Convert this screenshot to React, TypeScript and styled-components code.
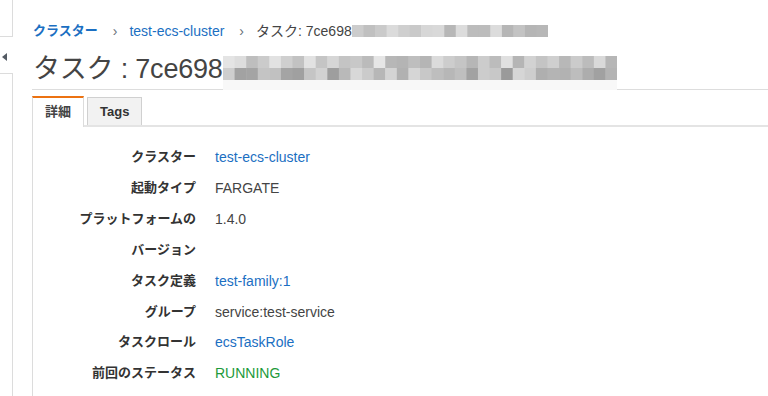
import React from "react";
import styled, { createGlobalStyle } from "styled-components";

const GlobalStyle = createGlobalStyle`
  html, body { margin: 0; padding: 0; background: #fff; }
  body {
    font-family: "Liberation Sans", Arial, "Noto Sans CJK JP", sans-serif;
    color: #444;
    -webkit-font-smoothing: antialiased;
  }
`;

const Page = styled.div`
  display: flex;
  min-height: 396px;
  height: 396px;
  overflow: hidden;
`;

const Sidebar = styled.aside`
  width: 13px;
  flex: 0 0 13px;
  display: flex;
  flex-direction: column;
`;

const SideTop = styled.div`
  height: 37px;
  border-right: 1px solid #dcdcdc;
  border-bottom: 1px solid #dcdcdc;
  box-sizing: border-box;
`;

const SideToggle = styled.div`
  height: 36px;
  display: flex;
  align-items: center;
  padding: 4px 0 0 2px;
  box-sizing: border-box;
`;

const Arrow = styled.span`
  width: 0;
  height: 0;
  border-top: 4px solid transparent;
  border-bottom: 4px solid transparent;
  border-right: 5px solid #545b64;
`;

const SideBottom = styled.div`
  flex: 1;
  border-right: 1px solid #dcdcdc;
  border-top: 1px solid #dcdcdc;
`;

const Main = styled.main`
  flex: 1;
  padding-left: 19px;
  display: flex;
  flex-direction: column;
`;

const Breadcrumb = styled.nav`
  display: flex;
  align-items: center;
  margin-top: 22px;
  padding-left: 1px;
  height: 18px;
  font-size: 14px;
  line-height: 18px;
  white-space: nowrap;
`;

const Crumb = styled.a<{ $bold?: boolean }>`
  color: #1b6fc2;
  text-decoration: none;
  font-weight: ${(p) => (p.$bold ? 700 : 400)};
  font-size: ${(p) => (p.$bold ? "13px" : "14px")};
`;

const Sep = styled.span`
  color: #687078;
  font-size: 14px;
  margin: 0 12px 0 15px;
`;

const CurrentCrumb = styled.span`
  color: #444;
  font-size: 14px;
`;

const Title = styled.h1`
  display: flex;
  align-items: flex-end;
  margin: 9px 0 0 0;
  height: 40px;
  border-bottom: 1px solid #dddddd;
  font-size: 27px;
  font-weight: 400;
  color: #444;
  white-space: nowrap;
`;

const TitleText = styled.span`
  line-height: 38px;
  padding-left: 1px;
  padding-bottom: 1px;
  letter-spacing: -0.2px;
`;

const MosaicSvg = styled.svg<{ $drop?: boolean }>`
  display: block;
  flex: 0 0 auto;
  margin-bottom: ${(p) => (p.$drop ? "-1px" : "0")};
`;

const TabBar = styled.div`
  display: flex;
  align-items: flex-end;
  gap: 3px;
  margin-top: 6px;
  border-bottom: 2px solid #e4e4e4;
`;

const Tab = styled.div<{ $active?: boolean }>`
  font-size: 13px;
  font-weight: 700;
  line-height: 27px;
  padding: 0 12px;
  color: ${(p) => (p.$active ? "#444" : "#333")};
  background: ${(p) => (p.$active ? "#fff" : "#f2f2f2")};
  border-left: 1px solid ${(p) => (p.$active ? "#dcdcdc" : "#d0d0d0")};
  border-right: 1px solid ${(p) => (p.$active ? "#dcdcdc" : "#d0d0d0")};
  border-top: ${(p) => (p.$active ? "2px solid #ec7211" : "1px solid #d0d0d0")};
  padding-bottom: ${(p) => (p.$active ? "2px" : "0")};
  margin-bottom: ${(p) => (p.$active ? "-2px" : "0")};
  position: relative;
`;

const Panel = styled.section`
  flex: 1;
  border-left: 1px solid #dcdcdc;
  padding: 15px 0 0 39px;
`;

const DetailGrid = styled.dl`
  display: grid;
  grid-template-columns: 124px 1fr;
  column-gap: 19px;
  margin: 0;
  line-height: 30.9px;
`;

const Label = styled.dt`
  text-align: right;
  font-size: 13px;
  font-weight: 700;
  color: #333;
`;

type Tone = "link" | "plain" | "ok";

const Value = styled.dd<{ $tone: Tone }>`
  margin: 0;
  font-size: 14px;
  color: ${(p) =>
    p.$tone === "link" ? "#1b6fc2" : p.$tone === "ok" ? "#1d9a3a" : "#444"};
`;

function makeGrays(n: number, seed: number, lo: number, hi: number) {
  const out: string[] = [];
  let s = seed;
  for (let i = 0; i < n; i++) {
    s = (s * 1103515245 + 12345) % 2147483648;
    const v = Math.round(lo + (s / 2147483648) * (hi - lo));
    const h = v.toString(16).padStart(2, "0");
    out.push(`#${h}${h}${h}`);
  }
  return out;
}

const Mosaic: React.FC<{
  cols: number;
  rows: { h: number; lo: number; hi: number; seed: number }[];
  width: number;
  band?: number;
  drop?: boolean;
}> = ({ cols, rows, width, band, drop }) => {
  const cw = width / cols;
  const total = rows.reduce((a, r) => a + r.h, 0) + (band ?? 0);
  let y = 0;
  const rects: React.ReactNode[] = [];
  rows.forEach((r, ri) => {
    const grays = makeGrays(cols, r.seed, r.lo, r.hi);
    grays.forEach((g, ci) => {
      rects.push(
        <rect
          key={`${ri}-${ci}`}
          x={ci * cw}
          y={y}
          width={cw + 0.5}
          height={r.h}
          fill={g}
        />
      );
    });
    y += r.h;
  });
  if (band) {
    rects.push(
      <rect key="band" x={0} y={y} width={width} height={band} fill="#f8f8f8" />
    );
  }
  return (
    <MosaicSvg $drop={drop} width={width} height={total} viewBox={`0 0 ${width} ${total}`}>
      {rects}
    </MosaicSvg>
  );
};

const rowsData: { label: string; value: string; tone: Tone }[] = [
  { label: "クラスター", value: "test-ecs-cluster", tone: "link" },
  { label: "起動タイプ", value: "FARGATE", tone: "plain" },
  { label: "プラットフォームのバージョン", value: "1.4.0", tone: "plain" },
  { label: "タスク定義", value: "test-family:1", tone: "link" },
  { label: "グループ", value: "service:test-service", tone: "plain" },
  { label: "タスクロール", value: "ecsTaskRole", tone: "link" },
  { label: "前回のステータス", value: "RUNNING", tone: "ok" },
];

export default function App() {
  return (
    <>
      <GlobalStyle />
      <Page>
        <Sidebar>
          <SideTop />
          <SideToggle>
            <Arrow />
          </SideToggle>
          <SideBottom />
        </Sidebar>
        <Main>
          <Breadcrumb>
            <Crumb $bold>クラスター</Crumb>
            <Sep>›</Sep>
            <Crumb>test-ecs-cluster</Crumb>
            <Sep>›</Sep>
            <CurrentCrumb>タスク: 7ce698</CurrentCrumb>
            <Mosaic
              cols={17}
              width={196}
              rows={[{ h: 12, lo: 0xb4, hi: 0xdc, seed: 7 }]}
            />
          </Breadcrumb>
          <Title>
            <TitleText>タスク : 7ce698</TitleText>
            <Mosaic
              cols={34}
              width={394}
              drop
              band={10}
              rows={[
                { h: 12, lo: 0xb4, hi: 0xe8, seed: 31 },
                { h: 12, lo: 0x98, hi: 0xd8, seed: 97 },
              ]}
            />
          </Title>
          <TabBar>
            <Tab $active>詳細</Tab>
            <Tab>Tags</Tab>
          </TabBar>
          <Panel>
            <DetailGrid>
              {rowsData.map((r) => (
                <React.Fragment key={r.label}>
                  <Label>{r.label}</Label>
                  <Value $tone={r.tone}>{r.value}</Value>
                </React.Fragment>
              ))}
            </DetailGrid>
          </Panel>
        </Main>
      </Page>
    </>
  );
}
